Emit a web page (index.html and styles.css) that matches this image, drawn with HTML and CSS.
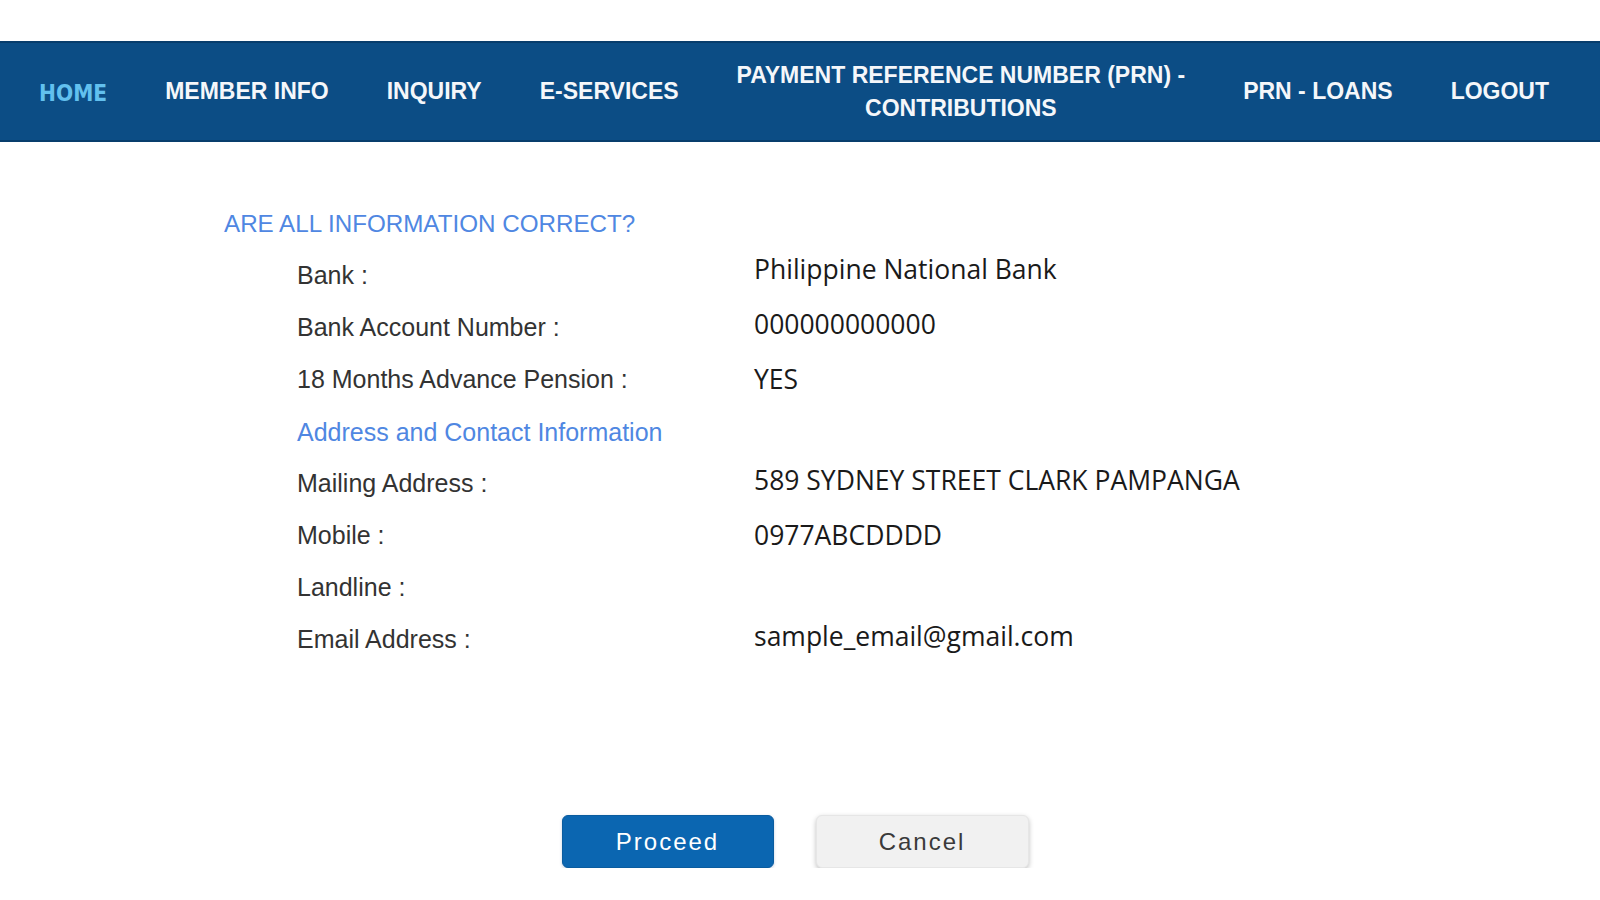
FILE: index.html
```html
<!DOCTYPE html>
<html lang="en">
<head>
<meta charset="utf-8">
<title>Confirm Information</title>
<link rel="stylesheet" href="styles.css">
</head>
<body>
<nav class="topnav">
  <ul class="menu">
    <li class="menu-item active">HOME</li>
    <li class="menu-item">MEMBER INFO</li>
    <li class="menu-item">INQUIRY</li>
    <li class="menu-item">E-SERVICES</li>
    <li class="menu-item two-line">PAYMENT REFERENCE NUMBER (PRN) -<br>CONTRIBUTIONS</li>
    <li class="menu-item">PRN - LOANS</li>
    <li class="menu-item">LOGOUT</li>
  </ul>
</nav>

<main class="content">
  <h2 class="title">ARE ALL INFORMATION CORRECT?</h2>
  <div class="details">
    <div class="label">Bank :</div>
    <div class="value v-up">Philippine National Bank</div>

    <div class="label">Bank Account Number :</div>
    <div class="value">000000000000</div>

    <div class="label">18 Months Advance Pension :</div>
    <div class="value v-small">YES</div>

    <div class="subhead">Address and Contact Information</div>

    <div class="label">Mailing Address :</div>
    <div class="value">589 SYDNEY STREET CLARK PAMPANGA</div>

    <div class="label">Mobile :</div>
    <div class="value v-small">0977ABCDDDD</div>

    <div class="label">Landline :</div>
    <div class="value"></div>

    <div class="label">Email Address :</div>
    <div class="value">sample_email@gmail.com</div>
  </div>

  <div class="actions">
    <button class="btn btn-primary" type="button">Proceed</button>
    <button class="btn btn-default" type="button">Cancel</button>
  </div>
</main>
</body>
</html>
```

FILE: styles.css
```css
* {
  box-sizing: border-box;
}

html, body {
  margin: 0;
  padding: 0;
  background: #ffffff;
}

body {
  font-family: "Liberation Sans", Arial, Helvetica, sans-serif;
  color: #333333;
  padding-top: 41px;
}

/* ---------- top navigation ---------- */
.topnav {
  background: #0c4d85;
  border-top: 2px solid #083d6c;
  border-bottom: 2px solid #083d6c;
  height: 101px;
}

.menu {
  list-style: none;
  margin: 0;
  padding: 0 0 0 39px;
  height: 100%;
  display: flex;
  align-items: center;
  gap: 58px;
}

.menu-item {
  font-family: "Liberation Sans", Arial, Helvetica, sans-serif;
  font-weight: bold;
  font-size: 23px;
  color: #f5f7fa;
  white-space: nowrap;
  line-height: 32px;
  padding-bottom: 2px;
}

.menu-item.active {
  font-family: "DejaVu Sans Condensed", "DejaVu Sans", Verdana, sans-serif;
  font-size: 22.5px;
  color: #62c0ee;
  padding-top: 3px;
  padding-bottom: 0;
}

.menu-item.two-line {
  text-align: center;
  line-height: 32.5px;
  padding-bottom: 0;
}

/* ---------- content ---------- */
.content {
  padding: 56px 0 0 224px;
}

.title {
  margin: 0;
  height: 52px;
  display: flex;
  align-items: center;
  font-weight: normal;
  font-size: 24.2px;
  color: #4f87e2;
}

.details {
  display: grid;
  grid-template-columns: 457px 1fr;
  grid-auto-rows: 52px;
  align-items: center;
  padding-left: 73px;
}

.label {
  font-size: 25px;
  color: #333333;
  padding-bottom: 2px;
}

.value {
  font-family: "Open Sans", "Noto Sans", sans-serif;
  font-size: 26.5px;
  color: #1a1a1a;
  padding-bottom: 8px;
}

.value.v-up {
  padding-bottom: 14px;
}

.value.v-small {
  padding-bottom: 2px;
}

.subhead {
  grid-column: 1 / -1;
  font-size: 25px;
  color: #4f87e2;
}

/* ---------- buttons ---------- */
.actions {
  display: flex;
  justify-content: center;
  gap: 42px;
  margin-top: 149px;
  margin-left: -224px;
  padding-right: 10px;
}

.btn {
  width: 212px;
  height: 53px;
  border-radius: 6px;
  font-family: "Liberation Sans", Arial, Helvetica, sans-serif;
  font-size: 24px;
  letter-spacing: 2px;
  cursor: pointer;
}

.btn-primary {
  background: #0b66b1;
  color: #ffffff;
  border: 1px solid #0a5c9f;
  box-shadow: 0 1px 3px rgba(0, 60, 140, 0.25);
}

.btn-default {
  width: 213px;
  background: #f1f1f1;
  color: #3a3a3a;
  border: 1px solid #e6e6e6;
  box-shadow: 0 2px 5px rgba(0, 0, 0, 0.25);
}
```
